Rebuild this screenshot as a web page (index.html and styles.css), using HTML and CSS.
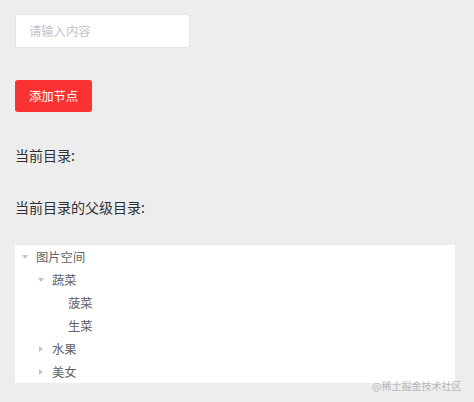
FILE: index.html
```html
<!DOCTYPE html>
<html lang="zh">
<head>
<meta charset="utf-8">
<title>Tree</title>
<link rel="stylesheet" href="styles.css">
</head>
<body>
<div class="page">
  <div class="input"><span class="placeholder">请输入内容</span></div>
  <button class="btn">添加节点</button>
  <div class="label first">当前目录:</div>
  <div class="label second">当前目录的父级目录:</div>
  <div class="tree">
    <div class="node lv1"><span class="caret"><svg width="6" height="4" viewBox="0 0 6 4"><path d="M0 0H6L3 4Z" fill="#c0c4cc"/></svg></span><span>图片空间</span></div>
    <div class="node lv2"><span class="caret"><svg width="6" height="4" viewBox="0 0 6 4"><path d="M0 0H6L3 4Z" fill="#c0c4cc"/></svg></span><span>蔬菜</span></div>
    <div class="node lv3"><span class="caret"></span><span>菠菜</span></div>
    <div class="node lv3"><span class="caret"></span><span>生菜</span></div>
    <div class="node lv2"><span class="caret"><svg width="4" height="6" viewBox="0 0 4 6"><path d="M0 0V6L4 3Z" fill="#c0c4cc"/></svg></span><span>水果</span></div>
    <div class="node lv2"><span class="caret"><svg width="4" height="6" viewBox="0 0 4 6"><path d="M0 0V6L4 3Z" fill="#c0c4cc"/></svg></span><span>美女</span></div>
  </div>
</div>
<div class="watermark">@稀土掘金技术社区</div>
</body>
</html>
```
FILE: styles.css
```css
html, body {
  margin: 0;
  padding: 0;
  background: #ededed;
  font-family: "Noto Sans CJK SC", "Noto Sans", sans-serif;
}
.page {
  padding: 14px 15px 0 15px;
  display: flex;
  flex-direction: column;
  align-items: flex-start;
}
.input {
  box-sizing: border-box;
  width: 175px;
  height: 34px;
  background: #fff;
  border: 1px solid #e2e4ea;
  border-radius: 3px;
  padding-left: 13px;
  display: flex;
  align-items: center;
}
.placeholder {
  font-size: 12.3px;
  color: #c0c4cc;
}
.btn {
  margin-top: 32px;
  box-sizing: border-box;
  width: 77px;
  height: 32px;
  border: none;
  border-radius: 3px;
  background: #fb3232;
  color: #fff;
  font-family: inherit;
  font-size: 12.3px;
  padding: 0;
}
.label {
  font-size: 14px;
  line-height: 20px;
  color: #303133;
}
.label.first { margin-top: 33px; }
.label.second { margin-top: 32px; }
.tree {
  margin-top: 28px;
  width: 440px;
  background: #fff;
}
.node {
  display: flex;
  align-items: center;
  height: 23px;
  font-size: 12.3px;
  color: #606266;
}
.node.lv2 { padding-left: 16px; }
.node.lv3 { padding-left: 32px; }
.caret {
  width: 21px;
  display: flex;
  justify-content: center;
  padding-right: 1px;
  box-sizing: border-box;
}
.caret svg { display: block; }
.watermark {
  position: absolute;
  left: 372px;
  top: 378px;
  font-size: 10px;
  color: #b9b9b9;
  letter-spacing: 0;
}
```
